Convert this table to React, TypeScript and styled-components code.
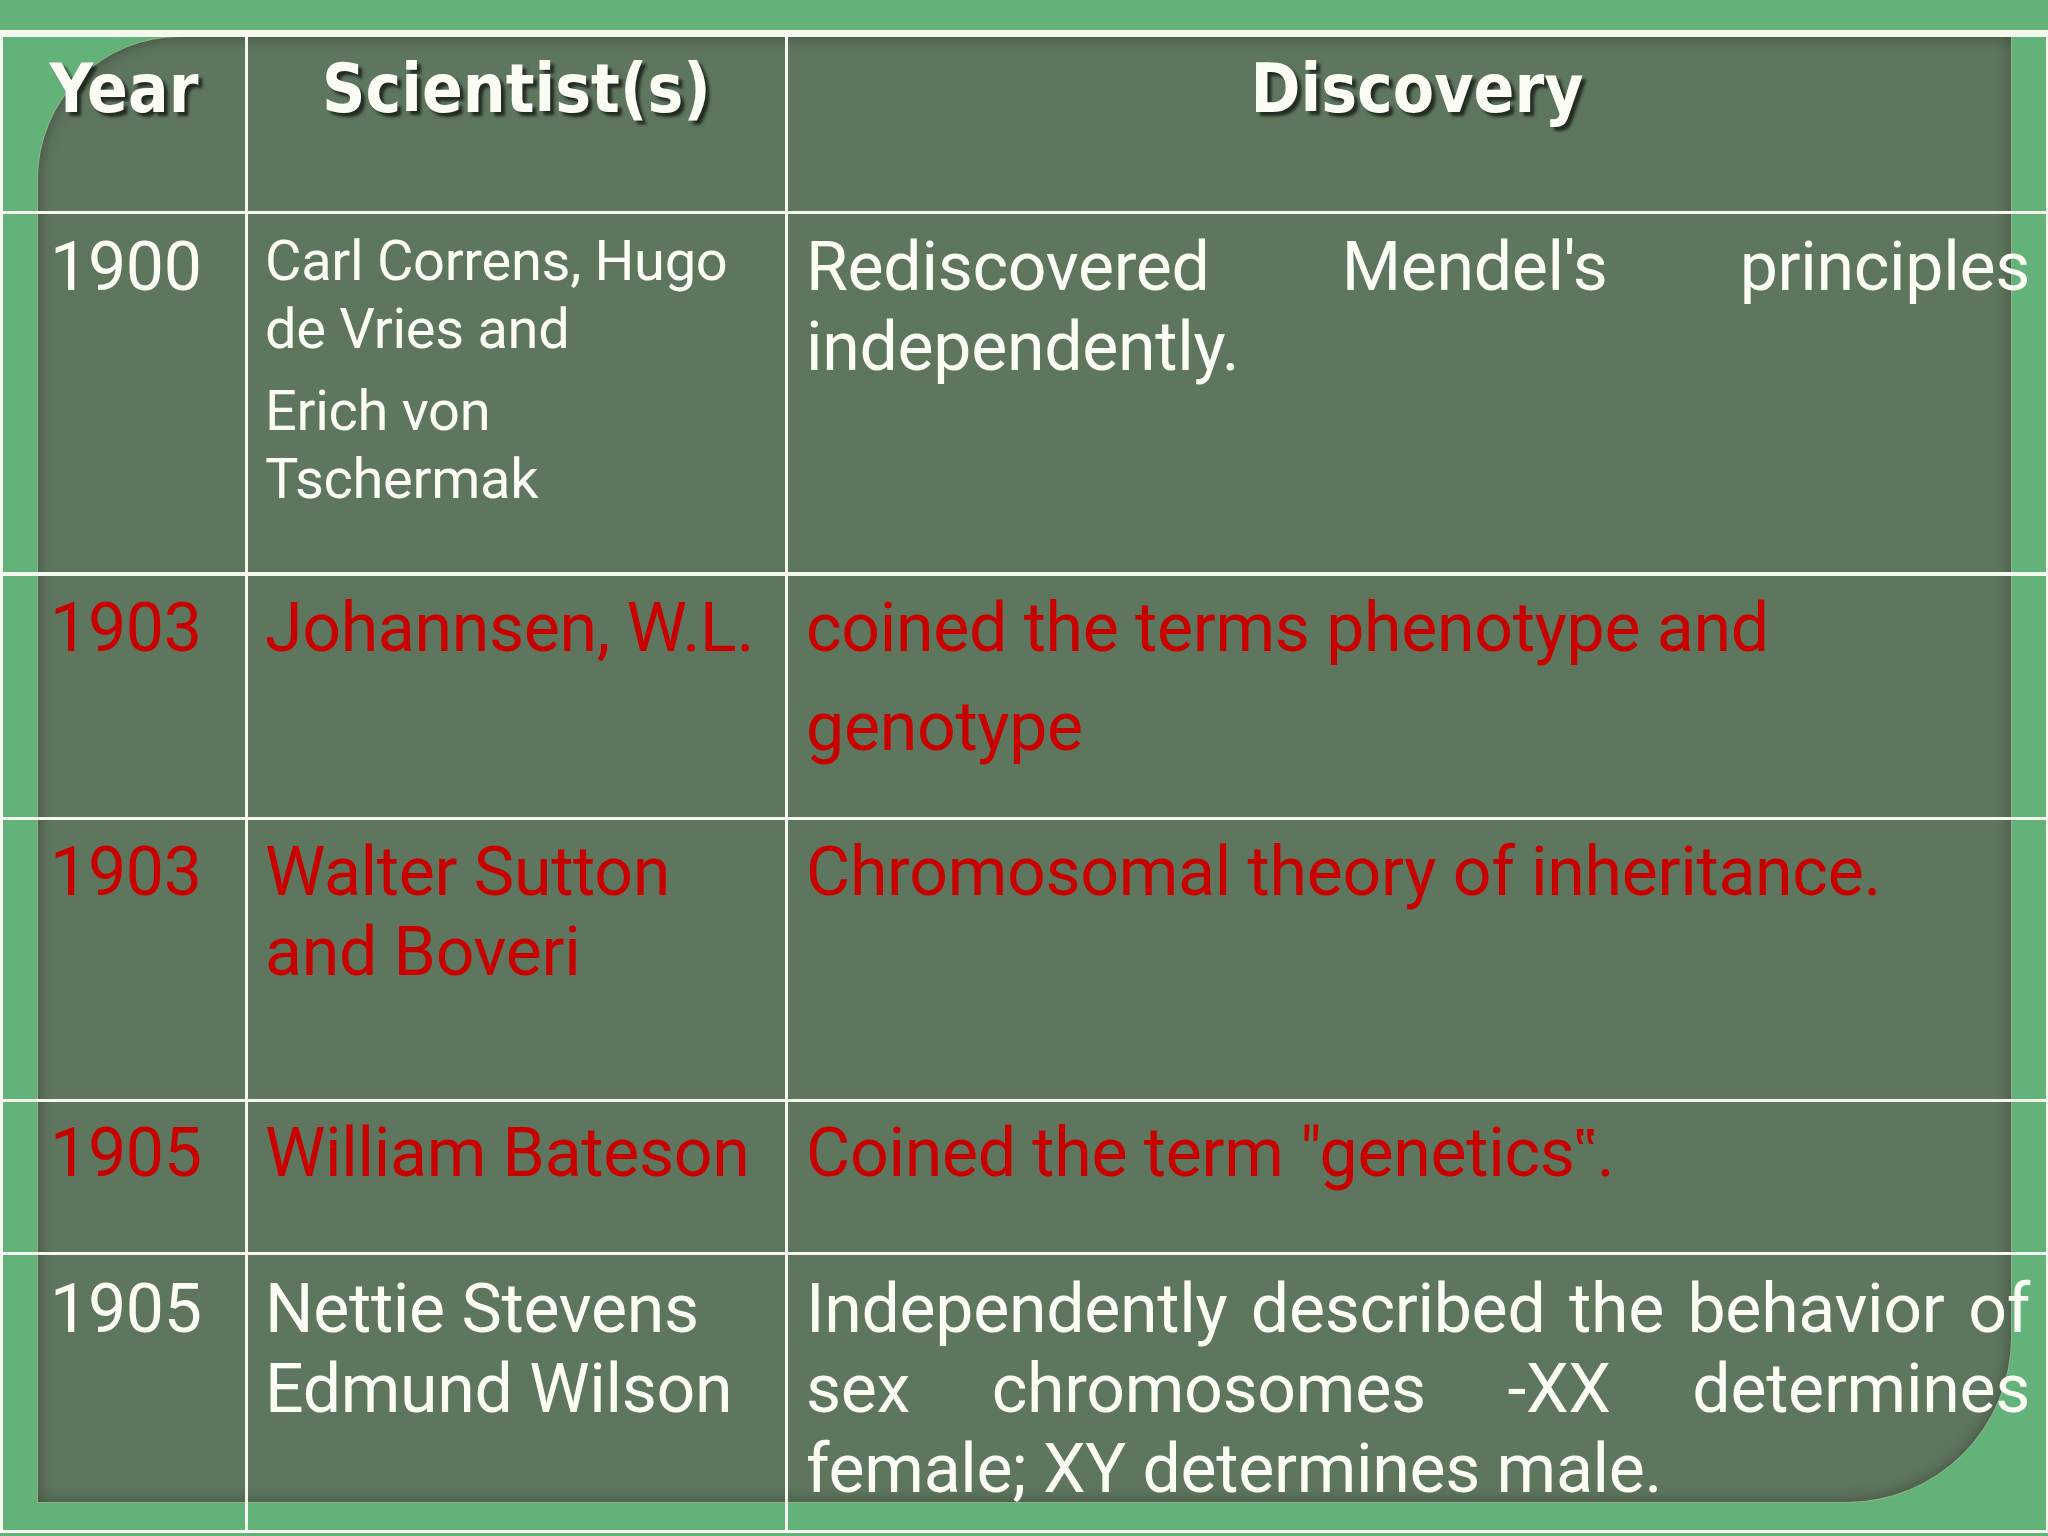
import React from 'react';
import styled, { createGlobalStyle } from 'styled-components';

const GREEN = '#63b27a';
const PANEL = '#5f765e';
const RULE = '#f4f8ef';
const LIGHT = '#fbfdf4';
const RED = '#c80000';

const GlobalStyle = createGlobalStyle`
  html, body {
    margin: 0;
    padding: 0;
    background: ${GREEN};
    overflow: hidden;
  }
`;

const Stage = styled.div`
  display: grid;
  width: 2048px;
  height: 1536px;
  background: ${GREEN};
`;

const Panel = styled.div`
  grid-area: 1 / 1;
  margin: 37px 37px 34px 38px;
  border-radius: 142px 0 165px 0;
  background: ${PANEL};
  box-shadow: inset 0 0 16px rgba(0, 0, 0, 0.35), 0 0 0 1px rgba(185, 180, 150, 0.55);
`;

const Table = styled.div`
  grid-area: 1 / 1;
  align-self: start;
  display: flex;
  flex-direction: column;
  margin-top: 30px;
  border-top: 7px solid ${RULE};
  border-left: 3px solid ${RULE};
  border-right: 2px solid ${RULE};
`;

const Row = styled.div<{ $h: number; $rule?: number }>`
  display: grid;
  grid-template-columns: 245px 540px 1fr;
  height: ${(p) => p.$h}px;
  box-sizing: border-box;
  border-bottom: ${(p) => p.$rule ?? 3}px solid ${RULE};
`;

const Cell = styled.div<{ $tone?: 'light' | 'red'; $pad?: number }>`
  box-sizing: border-box;
  min-width: 0;
  padding-top: ${(p) => p.$pad ?? 12}px;
  color: ${(p) => (p.$tone === 'red' ? RED : LIGHT)};
  font-family: Roboto, 'Liberation Sans', sans-serif;
  font-size: 68px;
  line-height: 80px;
  letter-spacing: -0.3px;
  &:not(:last-child) {
    border-right: 3px solid ${RULE};
  }
`;

const HeadCell = styled(Cell)`
  padding-top: 12px;
  text-align: center;
  font-family: 'DejaVu Sans Condensed', 'DejaVu Sans', sans-serif;
  font-stretch: semi-condensed;
  font-weight: 700;
  font-size: 67px;
  line-height: 80px;
  letter-spacing: 0;
  text-shadow: 4px 4px 3px rgba(25, 30, 25, 0.85);
`;

const YearCell = styled(Cell)`
  padding-left: 47px;
`;

const NameCell = styled(Cell)<{ $small?: boolean }>`
  padding-left: 17px;
  font-size: ${(p) => (p.$small ? 56 : 68)}px;
  line-height: ${(p) => (p.$small ? 68 : 80)}px;
  white-space: nowrap;
`;

const Para = styled.div`
  & + & {
    margin-top: 14px;
  }
`;

const FindCell = styled(Cell)<{ $lh?: number }>`
  padding-left: 18px;
  padding-right: 16px;
  line-height: ${(p) => p.$lh ?? 80}px;
`;

const Line = styled.div<{ $justify?: boolean }>`
  text-align: ${(p) => (p.$justify ? 'justify' : 'left')};
  text-align-last: ${(p) => (p.$justify ? 'justify' : 'left')};
`;

type Entry = {
  year: string;
  names: string[][];
  small?: boolean;
  found: { text: string; justify?: boolean }[];
  tone: 'light' | 'red';
  h: number;
  rule?: number;
  pad: number;
  lh?: number;
};

const entries: Entry[] = [
  {
    year: '1900',
    names: [
      ['Carl Correns, Hugo', 'de Vries and'],
      ['Erich von', 'Tschermak'],
    ],
    small: true,
    found: [
      { text: "Rediscovered Mendel's principles", justify: true },
      { text: 'independently.' },
    ],
    tone: 'light',
    h: 362,
    rule: 4,
    pad: 13,
  },
  {
    year: '1903',
    names: [['Johannsen, W.L.']],
    found: [{ text: 'coined the terms phenotype and' }, { text: 'genotype' }],
    tone: 'red',
    h: 244,
    pad: 12,
    lh: 99,
  },
  {
    year: '1903',
    names: [['Walter Sutton', 'and Boveri']],
    found: [{ text: 'Chromosomal theory of inheritance.' }],
    tone: 'red',
    h: 282,
    pad: 12,
  },
  {
    year: '1905',
    names: [['William Bateson']],
    found: [{ text: 'Coined the term "genetics‟.' }],
    tone: 'red',
    h: 153,
    pad: 11,
  },
  {
    year: '1905',
    names: [['Nettie Stevens', 'Edmund Wilson']],
    found: [
      { text: 'Independently described the behavior of', justify: true },
      { text: 'sex chromosomes -XX determines', justify: true },
      { text: 'female; XY determines male.' },
    ],
    tone: 'light',
    h: 278,
    pad: 14,
  },
];

export default function App() {
  return (
    <>
      <GlobalStyle />
      <Stage>
        <Panel />
        <Table>
          <Row $h={177}>
            <HeadCell>Year</HeadCell>
            <HeadCell>Scientist(s)</HeadCell>
            <HeadCell>Discovery</HeadCell>
          </Row>
          {entries.map((e, i) => {
            const lh = e.lh ?? 80;
            return (
              <Row key={i} $h={e.h} $rule={e.rule}>
                <YearCell $tone={e.tone} $pad={e.pad}>
                  {e.year}
                </YearCell>
                <NameCell $tone={e.tone} $pad={e.pad} $small={e.small}>
                  {e.names.map((para, j) => (
                    <Para key={j}>
                      {para.map((l, k) => (
                        <div key={k}>{l}</div>
                      ))}
                    </Para>
                  ))}
                </NameCell>
                <FindCell $tone={e.tone} $pad={e.pad - (lh - 80) / 2} $lh={lh}>
                  {e.found.map((l, k) => (
                    <Line key={k} $justify={l.justify}>
                      {l.text}
                    </Line>
                  ))}
                </FindCell>
              </Row>
            );
          })}
        </Table>
      </Stage>
    </>
  );
}
